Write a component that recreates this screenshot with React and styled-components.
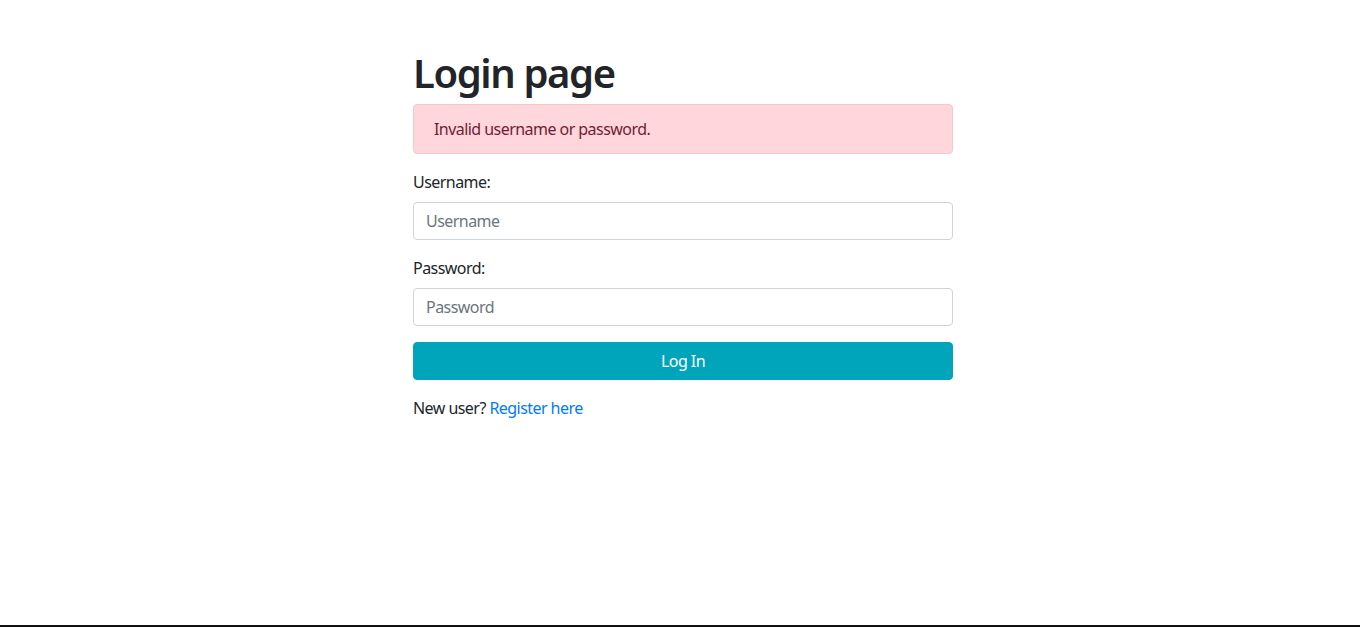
import React, { useState } from 'react'
import styled, { createGlobalStyle } from 'styled-components'

const GlobalStyle = createGlobalStyle`
	* {
		box-sizing: border-box;
	}
	body {
		margin: 0;
		font-family: "Noto Sans", "Open Sans", "Liberation Sans", sans-serif;
		font-size: 16px;
		line-height: 1.5;
		letter-spacing: -0.55px;
		color: #212529;
		background-color: #fff;
	}
`;

const Page = styled.div`
	height: 627px;
	display: flex;
	flex-direction: column;
`;

const Main = styled.main`
	flex: 1;
	padding-top: 48px;
	padding-left: 413px;
`;

const Wrapper = styled.div`
	width: 540px;
`;

const Title = styled.h1`
	margin: 0 0 8px;
	padding-top: 2px;
	height: 48px;
	font-size: 40px;
	font-weight: 600;
	line-height: 1.15;
	letter-spacing: -1.4px;
`;

const Alert = styled.div`
	padding: 12px 20px;
	margin-bottom: 16px;
	border: 1px solid #f9c6cd;
	border-radius: 4px;
	background-color: #fed6dc;
	color: #721c34;
`;

const FormGroup = styled.div`
	margin-bottom: 16px;
`;

const Label = styled.label`
	display: inline-block;
	margin-bottom: 8px;
`;

const Input = styled.input`
	display: block;
	width: 100%;
	height: 38px;
	padding: 6px 12px;
	font-family: inherit;
	font-size: 16px;
	line-height: 1.5;
	letter-spacing: inherit;
	color: #495057;
	background-color: #fff;
	border: 1px solid #ced4da;
	border-radius: 4px;
	outline: none;

	&::placeholder {
		color: #6c757d;
	}
`;

const Button = styled.button`
	display: block;
	width: 100%;
	height: 38px;
	padding: 6px 12px;
	font-family: inherit;
	font-size: 16px;
	line-height: 1.5;
	letter-spacing: inherit;
	color: #fff;
	background-color: #00a5bb;
	border: 1px solid #00a5bb;
	border-radius: 4px;
	cursor: pointer;
`;

const Footnote = styled.p`
	margin: 16px 0 0;
`;

const Link = styled.a`
	color: #007bff;
	text-decoration: none;
`;

const Taskbar = styled.div`
	height: 2px;
	background-color: #111;
`;

const Login = () => {
	const [username, setUsername] = useState('');
	const [password, setPassword] = useState('');

	return (
		<Wrapper>
			<Title>Login page</Title>
			<Alert>Invalid username or password.</Alert>
			<form onSubmit={(e) => e.preventDefault()}>
				<FormGroup>
					<Label htmlFor="username">Username:</Label>
					<Input
						id="username"
						type="text"
						placeholder="Username"
						value={username}
						onChange={(e) => setUsername(e.target.value)}
					/>
				</FormGroup>
				<FormGroup>
					<Label htmlFor="password">Password:</Label>
					<Input
						id="password"
						type="password"
						placeholder="Password"
						value={password}
						onChange={(e) => setPassword(e.target.value)}
					/>
				</FormGroup>
				<Button type="submit">Log In</Button>
			</form>
			<Footnote>
				New user? <Link href="#">Register here</Link>
			</Footnote>
		</Wrapper>
	)
}

const App = () => (
	<Page>
		<GlobalStyle />
		<Main>
			<Login />
		</Main>
		<Taskbar />
	</Page>
)

export default App
